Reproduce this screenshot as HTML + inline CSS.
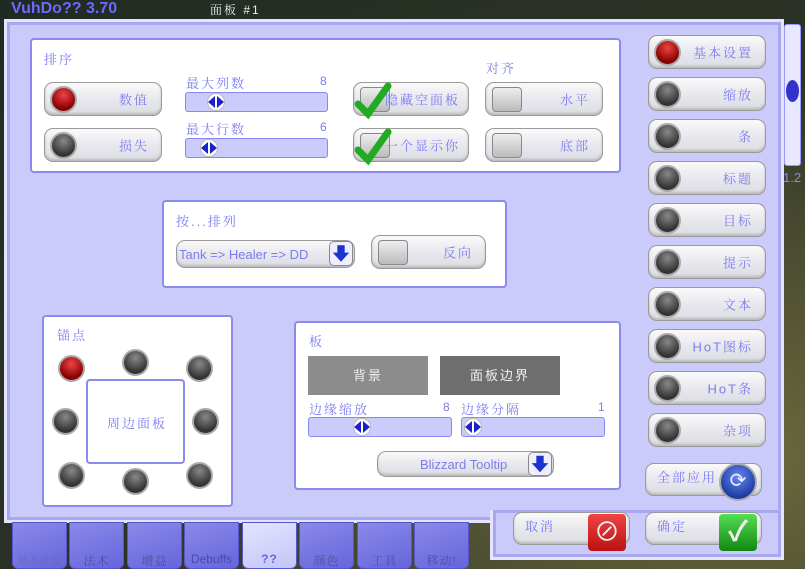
<!DOCTYPE html><html><head><meta charset="utf-8"><style>
*{box-sizing:border-box;margin:0;padding:0}
body{width:805px;height:569px;overflow:hidden;position:relative;background:radial-gradient(ellipse at 90% 80%,#6d6a3e,#2e3326 60%,#1f2a22);font-family:"Liberation Sans","Noto Sans CJK SC",sans-serif}
.a{position:absolute}
.t{color:#7c7cf0;font-size:13px;font-family:"Liberation Sans","Noto Serif CJK SC",serif;letter-spacing:2px}
.box{position:absolute;background:#fff;border:2px solid #8a8af0;border-radius:4px}
.btn{position:absolute;border:1px solid #9a9a9a;border-radius:9px;background:linear-gradient(#fafafa,#e8e8ee 50%,#dcdce4);box-shadow:inset 0 -2px 2px #bbb}
.btn .l{position:absolute;right:12px;top:50%;transform:translateY(-50%);color:#7c7cf0;font-size:13px;font-family:"Liberation Sans","Noto Serif CJK SC",serif;letter-spacing:2px}
.rad{position:absolute;left:5px;top:50%;margin-top:-13px;width:27px;height:27px;border-radius:50%;border:2px solid #aaa;background:radial-gradient(circle at 50% 30%,#888,#333 70%)}
.red{background:radial-gradient(circle at 50% 30%,#e44,#800 70%)}
.chk{position:absolute;left:6px;top:4px;width:30px;height:25px;border:1px solid #888;border-radius:4px;background:linear-gradient(#eee,#bbb)}
.sl{position:absolute;background:#ccccfc;border:1px solid #8888ee;border-radius:3px;height:20px}
.knob{position:absolute;top:0px;width:20px;height:18px}
.tab{position:absolute;top:522px;width:55px;height:47px;background:linear-gradient(160deg,#8a8ae8,#6565dd);border-radius:0 0 6px 6px;border:1px solid #5555cc;color:#5050a0;font-size:12px;text-align:center;padding-top:29px;letter-spacing:1px;font-family:"Liberation Sans","Noto Serif CJK SC",serif}
.dot{position:absolute;width:27px;height:27px;border-radius:50%;border:2px solid #aaa;background:radial-gradient(circle at 50% 30%,#888,#333 70%)}
.dd{position:absolute;right:1px;top:0;width:24px;height:25px;border:1px solid #888;border-radius:5px;background:#eef}
</style></head><body>
<svg width="0" height="0" style="position:absolute"><defs><symbol id="k" viewBox="0 0 20 18"><circle cx="10" cy="9" r="8.5" fill="#fff" stroke="#bbb"/><path d="M2 9 L9 3 V15 Z M18 9 L11 3 V15 Z" fill="#1a22cc"/></symbol><symbol id="dn" viewBox="0 0 24 24"><path d="M8 3 H16 V11 H21 L12 21 L3 11 H8 Z" fill="#1a33cc"/></symbol></defs></svg>
<div class="a" style="left:11px;top:0;color:#6a6aff;font-weight:bold;font-size:16px">VuhDo?? 3.70</div>
<div class="a" style="left:210px;top:1px;color:#eee;font-size:12px;letter-spacing:2px;font-family:'Liberation Sans','Noto Serif CJK SC',serif">面板 #1</div>
<div class="a" style="left:4px;top:19px;width:780px;height:504px;background:#cbcbfb;border:3px solid #e4e4ff;box-shadow:inset 0 0 0 3px #a8a8f0"></div>
<div class="a" style="left:490px;top:510px;width:294px;height:50px;background:#cbcbfb;border:3px solid #e4e4ff;border-top:none;box-shadow:inset 0 0 0 3px #a8a8f0"></div>
<div class="a" style="left:784px;top:24px;width:17px;height:142px;background:#e8e8ff;border:1px solid #99f;border-radius:3px"></div>
<div class="a" style="left:786px;top:80px;width:13px;height:22px;background:#3333cc;border-radius:50%"></div>
<div class="a" style="left:783px;top:170px;color:#8888ee;font-size:13px">1.2</div>

<div class="box" style="left:30px;top:38px;width:591px;height:135px"></div>
<div class="a t" style="left:44px;top:49px">排序</div>
<div class="btn" style="left:44px;top:82px;width:118px;height:34px"><div class="rad red"></div><div class="l">数值</div></div>
<div class="btn" style="left:44px;top:128px;width:118px;height:34px"><div class="rad"></div><div class="l">损失</div></div>
<div class="a t" style="left:186px;top:73px">最大列数</div><div class="a" style="left:320px;top:74px;color:#7c7cf0;font-size:12px">8</div>
<div class="sl" style="left:185px;top:92px;width:143px"><svg class="knob" style="left:20px"><use href="#k"/></svg></div>
<div class="a t" style="left:186px;top:119px">最大行数</div><div class="a" style="left:320px;top:120px;color:#7c7cf0;font-size:12px">6</div>
<div class="sl" style="left:185px;top:138px;width:143px"><svg class="knob" style="left:13px"><use href="#k"/></svg></div>
<div class="btn" style="left:353px;top:82px;width:116px;height:34px"><div class="chk"></div><div class="l" style="right:8px">隐藏空面板</div></div>
<div class="btn" style="left:353px;top:128px;width:116px;height:34px"><div class="chk"></div><div class="l" style="right:8px">一个显示你</div></div>
<svg class="a" style="left:354px;top:80px" width="40" height="88"><path d="M4 24 L14 34 L34 6" stroke="#22aa22" stroke-width="7" fill="none" stroke-linecap="round"/><path d="M4 70 L14 80 L34 52" stroke="#22aa22" stroke-width="7" fill="none" stroke-linecap="round"/></svg>
<div class="a t" style="left:486px;top:58px">对齐</div>
<div class="btn" style="left:485px;top:82px;width:118px;height:34px"><div class="chk"></div><div class="l">水平</div></div>
<div class="btn" style="left:485px;top:128px;width:118px;height:34px"><div class="chk"></div><div class="l">底部</div></div>

<div class="box" style="left:162px;top:200px;width:345px;height:88px"></div>
<div class="a t" style="left:176px;top:211px">按...排列</div>
<div class="btn" style="left:176px;top:240px;width:179px;height:28px"><div class="a" style="left:2px;top:6px;color:#7c7cf0;font-size:13px">Tank =&gt; Healer =&gt; DD</div><svg class="dd"><use href="#dn"/></svg></div>
<div class="btn" style="left:371px;top:235px;width:115px;height:34px"><div class="chk"></div><div class="l">反向</div></div>

<div class="box" style="left:42px;top:315px;width:191px;height:192px"></div>
<div class="a t" style="left:57px;top:325px">锚点</div>
<div class="dot" style="left:58px;top:355px;background:radial-gradient(circle at 50% 30%,#e44,#800 70%)"></div>
<div class="dot" style="left:122px;top:349px"></div><div class="dot" style="left:186px;top:355px"></div>
<div class="dot" style="left:52px;top:408px"></div><div class="dot" style="left:192px;top:408px"></div>
<div class="dot" style="left:58px;top:462px"></div><div class="dot" style="left:122px;top:468px"></div><div class="dot" style="left:186px;top:462px"></div>
<div class="box" style="left:86px;top:379px;width:99px;height:85px;border-width:2px"></div>
<div class="a t" style="left:107px;top:413px">周边面板</div>

<div class="box" style="left:294px;top:321px;width:327px;height:169px"></div>
<div class="a t" style="left:309px;top:331px">板</div>
<div class="a" style="left:308px;top:356px;width:120px;height:39px;background:#8c8c8c;color:#eee;font-size:13px;text-align:center;line-height:39px;letter-spacing:2px">背景</div>
<div class="a" style="left:440px;top:356px;width:120px;height:39px;background:#6e6e6e;color:#eee;font-size:13px;text-align:center;line-height:39px;letter-spacing:2px">面板边界</div>
<div class="a t" style="left:309px;top:399px">边缘缩放</div><div class="a" style="left:443px;top:400px;color:#7c7cf0;font-size:12px">8</div>
<div class="sl" style="left:308px;top:417px;width:144px"><svg class="knob" style="left:43px"><use href="#k"/></svg></div>
<div class="a t" style="left:461px;top:399px">边缘分隔</div><div class="a" style="left:598px;top:400px;color:#7c7cf0;font-size:12px">1</div>
<div class="sl" style="left:461px;top:417px;width:144px"><svg class="knob" style="left:1px"><use href="#k"/></svg></div>
<div class="btn" style="left:377px;top:451px;width:177px;height:26px"><div class="a" style="left:42px;top:5px;color:#7c7cf0;font-size:13px">Blizzard Tooltip</div><svg class="dd" style="height:24px"><use href="#dn"/></svg></div>

<div class="btn" style="left:648px;top:35px;width:118px;height:34px"><div class="rad red"></div><div class="l">基本设置</div></div>
<div class="btn" style="left:648px;top:77px;width:118px;height:34px"><div class="rad"></div><div class="l">缩放</div></div>
<div class="btn" style="left:648px;top:119px;width:118px;height:34px"><div class="rad"></div><div class="l">条</div></div>
<div class="btn" style="left:648px;top:161px;width:118px;height:34px"><div class="rad"></div><div class="l">标题</div></div>
<div class="btn" style="left:648px;top:203px;width:118px;height:34px"><div class="rad"></div><div class="l">目标</div></div>
<div class="btn" style="left:648px;top:245px;width:118px;height:34px"><div class="rad"></div><div class="l">提示</div></div>
<div class="btn" style="left:648px;top:287px;width:118px;height:34px"><div class="rad"></div><div class="l">文本</div></div>
<div class="btn" style="left:648px;top:329px;width:118px;height:34px"><div class="rad"></div><div class="l">HoT图标</div></div>
<div class="btn" style="left:648px;top:371px;width:118px;height:34px"><div class="rad"></div><div class="l">HoT条</div></div>
<div class="btn" style="left:648px;top:413px;width:118px;height:34px"><div class="rad"></div><div class="l">杂项</div></div>
<div class="btn" style="left:645px;top:463px;width:117px;height:33px"><div class="a t" style="left:11px;top:3px">全部应用</div></div>
<div class="a" style="left:719px;top:463px;width:38px;height:38px;border-radius:50%;border:2px solid #aaa;background:radial-gradient(circle at 50% 35%,#6688ee,#1a3aa0 75%);color:#eef;font-size:20px;text-align:center;line-height:33px">⟳</div>
<div class="btn" style="left:513px;top:512px;width:117px;height:33px"><div class="a t" style="left:11px;top:3px">取消</div></div>
<div class="a" style="left:588px;top:514px;width:38px;height:37px;border-radius:4px;background:linear-gradient(#e44,#b11);color:#eee;font-size:26px;text-align:center;line-height:36px">⊘</div>
<div class="btn" style="left:645px;top:512px;width:117px;height:33px"><div class="a t" style="left:11px;top:3px">确定</div></div>
<div class="a" style="left:719px;top:514px;width:38px;height:37px;border-radius:4px;background:linear-gradient(#5d5,#181);color:#eee;font-size:28px;text-align:center;line-height:36px;font-weight:bold">✓</div>

<div class="tab" style="left:12px;color:#6a6ab8;letter-spacing:0;font-size:11px">基本设置</div>
<div class="tab" style="left:69px">法术</div>
<div class="tab" style="left:127px">增益</div>
<div class="tab" style="left:184px;letter-spacing:0;color:#4a4ab0">Debuffs</div>
<div class="tab" style="left:242px;background:linear-gradient(160deg,#e4e4ff,#c4c4f8);color:#6666dd;font-weight:bold">??</div>
<div class="tab" style="left:299px">颜色</div>
<div class="tab" style="left:357px">工具</div>
<div class="tab" style="left:414px">移动!</div>
</body></html>
